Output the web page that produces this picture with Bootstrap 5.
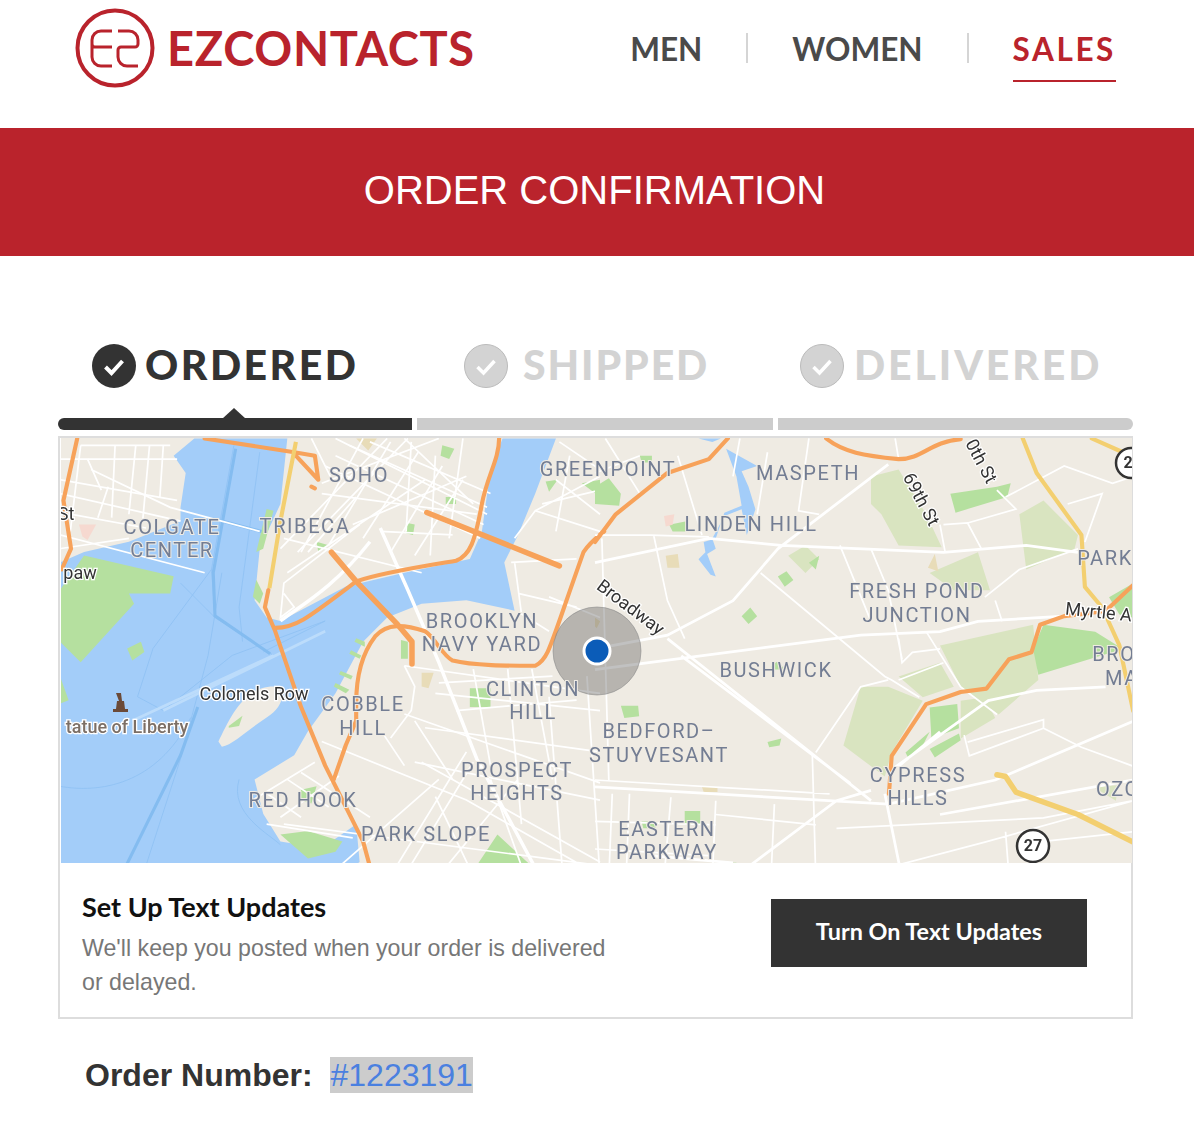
<!DOCTYPE html>
<html lang="en">
<head>
<meta charset="UTF-8">
<meta name="viewport" content="width=device-width, initial-scale=1">
<title>Order Confirmation</title>
<link href="https://cdn.jsdelivr.net/npm/bootstrap@5.3.3/dist/css/bootstrap.min.css" rel="stylesheet">
<style>
body { font-family: "Liberation Sans", Arial, sans-serif; background: #fff; color: #333; }
.site-head { height: 128px; padding: 0 78px 32px 75px; }
.logo-mark { width: 80px; height: 80px; }
.logo-word { font-family: Lato, sans-serif; font-weight: 700; font-size: 47px; color: #b9232c; margin-left: 12px; letter-spacing: .7px; line-height: 1; }
.top-nav a { font-family: Lato, sans-serif; font-weight: 700; font-size: 31.5px; color: #4a4a4a; text-decoration: none; line-height: 32px; padding: 19px 0 15px; border-bottom: 2px solid transparent; }
.top-nav a.is-active { color: #b9232c; border-bottom-color: #b9232c; letter-spacing: 2.6px; }
.top-nav .sep { width: 2px; height: 30px; background: #d5d5d5; margin: 0 44px; }
.hero-band { height: 128px; padding: 0 5px 4px 0; background: #ba232c; color: #fff; font-size: 40px; }
.order-wrap { padding: 0 61px 0 58px; }
.step-row { padding-top: 88px; height: 162px; }
.step-item { font-family: Lato, sans-serif; font-weight: 900; font-size: 41px; line-height: 42px; color: #d3d3d3; letter-spacing: 2.5px; }
.step-item.is-done { color: #333; }
.step-one { width: 359px; padding-left: 34px; gap: 9px; }
.step-two { width: 361px; padding-left: 47px; gap: 15px; letter-spacing: 1.9px; }
.step-three { padding-left: 22px; gap: 10px; letter-spacing: 2.9px; }
.step-icon { width: 44px; height: 44px; flex: none; }
.track-row { gap: 5px; height: 12px; }
.track-piece { flex: 1 1 0; background: #ccc; position: relative; }
.track-piece.is-done { background: #333; border-radius: 6px 0 0 6px; flex: 0 0 354px; }
.track-piece.is-last { border-radius: 0 6px 6px 0; flex: 0 0 355px; }
.track-piece.is-mid { flex: 0 0 356px; }
.track-notch { position: absolute; left: 164px; top: -10px; width: 24px; height: 11px; background: #333; clip-path: polygon(50% 0, 100% 100%, 0 100%); }
.map-card { margin-top: 6px; border: 2px solid #ddd; border-radius: 0; height: 583px; }
.map-box { display: block; width: 1071px; height: 425px; margin-left: 1px; filter: blur(.45px); }
.map-lbl { font-family: Roboto, sans-serif; font-size: 20px; fill: #737d93; letter-spacing: 1.6px; text-anchor: middle; paint-order: stroke; stroke: #efebe3; stroke-width: 2px; }
.map-dark { font-family: Roboto, sans-serif; font-size: 18px; fill: #333; text-anchor: middle; paint-order: stroke; stroke: #fff; stroke-width: 2.5px; }
.map-brown { fill: #7c6f66; font-weight: 500; }
.shield-num { font-family: Roboto, sans-serif; font-size: 16px; font-weight: 700; fill: #333; text-anchor: middle; }
.sms-box { padding: 27px 44px 0 22px; }
.sms-title { font-family: Lato, sans-serif; font-weight: 700; font-size: 27px; line-height: 34px; color: #111; margin: 0 0 7px; }
.sms-copy { font-size: 23.2px; line-height: 34px; color: #777; width: 540px; margin: 0; }
.sms-btn { width: 316px; height: 68px; padding: 0 0 3px; background: #333; color: #fff; font-family: Lato, sans-serif; font-weight: 700; font-size: 23.4px; border: 0; border-radius: 0; margin-top: 9px; }
.order-num { padding: 37px 0 0 27px; font-size: 32px; line-height: 38px; }
.order-num b { color: #333; margin-right: 9px; }
.order-num span { color: #4a80e0; background: #ccc; }
</style>
</head>
<body>
<header class="site-head d-flex align-items-center justify-content-between">
  <a class="d-flex align-items-center text-decoration-none" href="#">
    <svg class="logo-mark" viewBox="0 0 80 80" fill="none" stroke="#b9232c">
      <circle cx="40" cy="40" r="37.500" stroke-width="4"/>
      <g stroke-width="3">
        <path d="M37 23H26a9 9 0 0 0-9 9v4a3 3 0 0 0 3 3h17M17 36v13a9 9 0 0 0 9 9h11"/>
        <path d="M43 23h11a9 9 0 0 1 9 9v4a3 3 0 0 1-3 3H46a3 3 0 0 0-3 3v7a9 9 0 0 0 9 9h11"/>
      </g>
    </svg>
    <span class="logo-word">EZCONTACTS</span>
  </a>
  <nav class="top-nav d-flex align-items-center">
    <a href="#">MEN</a><span class="sep"></span>
    <a href="#">WOMEN</a><span class="sep"></span>
    <a href="#" class="is-active">SALES</a>
  </nav>
</header>

<div class="hero-band d-flex align-items-center justify-content-center">ORDER CONFIRMATION</div>

<main class="order-wrap">
  <div class="step-row d-flex">
    <div class="step-item is-done step-one d-flex">
      <svg class="step-icon" viewBox="0 0 44 44"><circle cx="22" cy="22" r="22" fill="#333"/><path d="M13.500 23l6 6 11-12" fill="none" stroke="#fff" stroke-width="4"/></svg>
      <span>ORDERED</span>
    </div>
    <div class="step-item step-two d-flex">
      <svg class="step-icon" viewBox="0 0 44 44"><circle cx="22" cy="22" r="21.500" fill="#d3d3d3" stroke="#bbb"/><path d="M13.500 23l6 6 11-12" fill="none" stroke="#fff" stroke-width="3.500"/></svg>
      <span>SHIPPED</span>
    </div>
    <div class="step-item step-three d-flex">
      <svg class="step-icon" viewBox="0 0 44 44"><circle cx="22" cy="22" r="21.500" fill="#d3d3d3" stroke="#bbb"/><path d="M13.500 23l6 6 11-12" fill="none" stroke="#fff" stroke-width="3.500"/></svg>
      <span>DELIVERED</span>
    </div>
  </div>
  <div class="track-row d-flex">
    <div class="track-piece is-done"><div class="track-notch"></div></div>
    <div class="track-piece is-mid"></div>
    <div class="track-piece is-last"></div>
  </div>

  <section class="map-card card">
    <svg class="map-box" viewBox="61 438 1071 425" xmlns="http://www.w3.org/2000/svg">
      <rect x="61" y="438" width="1071" height="425" fill="#efebe3"/>

      <!-- west part, drawn in zoomed crop units -->
      <g transform="translate(60 435) scale(.3444)">
        <path fill="#a3cdf9" d="M390 10 330 60 365 110 350 210 350 250 200 310 70 340 0 370V1285H800L870 1240 860 1130 760 1200 640 1180 590 1100 565 1000 680 930 720 860 800 750 880 600 950 530 1050 490 1180 480 1320 510 1290 370 1330 290 1380 170 1440 10H1285L1250 100 1225 280 1190 360 1000 400 830 440 640 540 600 530 565 480 580 330 640 200 660 10Z"/>
        <path fill="#b5e09f" d="M0 450 70 350 330 410 320 460 200 460 215 490 60 660 0 600ZM195 620 235 600 245 630 210 655ZM0 700 25 770 0 780ZM720 1150 820 1180 800 1210 720 1230 640 1160ZM1270 1160 1400 1280H1190ZM1190 735H1250V790H1190ZM1110 30 1145 40 1130 70 1105 60ZM600 215 620 220 590 330 570 340ZM570 420 590 460 580 490 560 470ZM745 310 780 320 750 340ZM1410 135 1445 130 1420 165ZM1515 140 1568 130V180ZM700 1030 745 1020 730 1070 695 1060ZM1005 255 1030 260 1025 290 1005 285ZM1120 180H1150V200H1120ZM990 595 1010 600V650H990ZM860 590 885 600 885 615 855 600ZM845 625 875 640 870 650 840 635ZM815 685 850 700 845 710 810 695ZM800 720 840 740 830 750 795 730Z"/>
        <path fill="#efebe3" d="M460 890C490 830 530 730 620 730 660 735 650 790 600 820 540 860 500 900 470 905Z"/>
        <path fill="#b5e09f" d="M490 845 530 815 520 845 490 850Z"/>
        <path fill="#e8dcb8" d="M860 10H920L895 45ZM1050 690H1085L1070 735 1050 730Z"/>
        <path fill="#f6d9d0" d="M55 260H105L80 305 65 295Z"/>
        <path fill="none" stroke="#8fc1f3" stroke-width="2.500" d="M505 30 440 390 450 530 620 640M580 50 520 500 530 600M440 390 270 620 225 760 300 800 500 640 770 540M450 530 350 430M0 1020C110 1040 280 1020 380 820M240 1280 350 940 430 640 470 400M520 1000C490 1100 610 1160 640 1190M590 630 770 540"/>
        <path fill="none" stroke="#84bcf0" stroke-width="9" d="M510 40 445 400 450 525 610 635M175 1285 350 930 400 790M470 250 585 280"/>
        <path fill="none" stroke="#bcdcfb" stroke-width="8" d="M300 800 770 570M210 830 620 640"/>

        <g fill="none" stroke="#fff" stroke-width="5">
          <path d="M60 30H320M90 100 320 210 580 280M0 170 350 250M80 70 120 160M220 30 200 230M300 30 290 180M30 230 250 270M140 150 110 240M0 290 420 400"/>
          <path d="M0 70 340 70M0 130 340 190M160 30 150 240M260 30 240 250M60 30 30 280M0 330 200 300"/>
          <path d="M800 10 1240 230M760 140 1100 10M1000 10 1200 200M640 330 950 10M690 340 1010 10M660 400 1060 130M720 340 860 180M930 280 1140 290M760 170 1210 230M650 300 1050 400M850 260 1180 120M730 10 790 130M1020 20 1005 280M1090 60 1075 350M1170 10 1130 300"/>
          <path d="M800 60 1230 260M770 90 1220 300M840 30 1240 210M900 20 1250 170M880 10 700 340M960 20 780 320M1040 50 880 300M1110 90 960 340M1170 130 1030 350"/>
          <path d="M1310 370 1500 360M1320 300 1380 220 1568 280M1380 220 1568 120M1440 130 1568 230M1320 370 1340 520 1420 570M1420 470 1568 530M1450 20 1568 100M1400 200 1568 160M1480 60 1440 280M1330 460 1500 500"/>
          <path d="M1000 670 1568 750M1000 810 1568 1010M1100 720 1430 700M1150 800 1500 770M1030 830 1140 1000M1300 680 1340 1130M1420 760 1460 1280M1530 700 1568 1285M1180 920 960 1280M1100 1000 780 1280M650 1130 1568 1250M760 890 1180 1060 1568 1280M1050 950 1568 1240M1200 950 1000 1280M1330 1000 1100 1280"/>
          <path d="M1090 750 1568 800M1060 850 1568 920M1030 950 1568 1060M1200 680 1250 960M1370 680 1430 1000M1090 1050 1200 1280M1250 1000 1350 1280"/>
          <path d="M560 1060 740 950M640 1110 810 990M700 980 900 1110M940 870 1000 960M1000 670 1030 730 1020 800 960 880M600 1040 700 1110M660 1000 780 1080M600 1130 850 1170"/>
          <path d="M650 460 680 500 640 530 650 430 870 260"/>
        </g>
        <g fill="none" stroke="#fff" stroke-width="10">
          <path d="M930 270 1010 450 1100 660 1210 940 1395 1285"/>
          <path d="M640 540C690 500 790 450 900 310"/>
        </g>
        <g fill="none" stroke="#f7a25a" stroke-linejoin="round" stroke-linecap="round">
          <g stroke-width="12">
            <path d="M50 10 10 190 32 330 5 390"/>
            <path d="M420 10 680 50 740 60 750 130 680 55M740 155 730 150"/>
            <path d="M605 450 595 500 625 570 700 790 770 960 820 1060 880 1180 910 1290"/>
            <path d="M625 560C680 560 710 540 860 425 930 400 1060 380 1150 365 1190 350 1205 310 1225 200 1240 120 1275 70 1275 10"/>
            <path d="M860 780C860 700 880 630 915 585 950 545 1000 550 1060 570 1090 590 1110 640 1140 655 1200 670 1300 670 1380 670 1420 650 1420 620 1520 340 1540 310 1568 290 1580 280"/>
            <path d="M860 780 860 830 830 900 795 1000"/>
          </g>
          <path stroke-width="16" d="M1065 225 1450 380M788 340 860 425 980 550 1022 600 1022 665"/>
        </g>
        <path fill="none" stroke="#f3cf70" stroke-width="12" d="M685 20 640 250 608 445"/>
        <path fill="none" stroke="#f3cf70" stroke-width="12" d="M920 1260 950 1290"/>
      </g>

      <!-- east part -->
      <g transform="translate(595 435) scale(.345)">
        <path fill="#a3cdf9" d="M300 10H365L340 20ZM380 40 470 90 425 105 445 150 465 215 440 290 425 215 375 235 340 300 350 330 325 345 350 410 335 405 300 360 320 340 315 310 350 300 375 225 425 205 410 120Z"/>
        <path fill="#a3cdf9" d="M1000 790 1030 830 1010 835Z"/>
        <path fill="#d9e4c0" d="M800 120 880 100 960 230 1005 325 880 320 830 230 800 200ZM1230 230 1300 190 1400 290 1390 330 1250 390ZM970 400 1110 340 1145 450 1040 450ZM560 350 610 320 650 360 610 400ZM1000 610 1270 550 1285 710 1170 810 1060 730ZM880 700 1000 660 1040 730 950 760ZM720 900 770 730 850 730 950 770 860 920 840 990ZM1060 770 1130 760 1160 820 1060 880Z"/>
        <path fill="#b5e09f" d="M1030 170 1165 150 1205 140 1195 180 1045 225ZM0 150 40 125 75 170 70 205 0 200ZM1270 620 1300 550 1450 570 1530 620 1285 695ZM970 790 1050 780 1055 850 975 880ZM900 920 970 860 950 900 910 940ZM970 910 1055 865 1060 885 985 935ZM215 260 265 250V280L225 280ZM530 410 555 395 575 420 550 440ZM425 525 450 500 470 525 445 548ZM75 785H125L128 815 85 820ZM500 890 540 880 535 900 505 905ZM135 1120H175V1140H140ZM260 1090H305V1130H260ZM375 1240H410V1285H375ZM1490 470 1560 430V530L1520 520ZM130 60H165V80H135ZM620 370 650 350 640 390ZM510 670 530 655 550 680H510ZM1220 1180H1250V1210H1225Z"/>
        <path fill="#e8dcb8" d="M205 350 240 345 245 385 210 385ZM965 385 985 345 995 395ZM310 1020H355V1035H315ZM0 530 15 540 5 560 0 555Z"/>
        <path fill="#f6d9d0" d="M200 235 230 230 225 260 205 265Z"/>
        <path fill="#d9e4c0" d="M1445 1020 1515 1015 1510 1060Z"/>
        <g fill="none" stroke="#fff" stroke-width="5">
          <path d="M30 10 130 170M240 60 310 290M420 10 400 120M500 50 470 230M620 10 590 220 650 230M870 10 880 70M0 290 160 290 330 295M170 290 210 480 260 590M480 400 840 700 860 710 940 760M710 320 800 540M800 330 850 450 890 650M1010 260 1080 255 1120 330M1000 260 1015 340M1080 255 1220 215 1165 160M1190 180 1360 90 1500 140 1560 120M1370 200 1470 170 1420 310M1130 470 1230 390 1400 330M1160 480 1180 540M960 570 1060 730 1165 810M880 590 890 660 920 630 1000 620M880 710 1010 660M640 920 770 730 850 710M630 930 640 1285M520 1070 510 1285M350 1060 340 1285M50 1040 40 1285M20 300 40 1000M0 1000 680 1040M700 1140 1300 1110 1560 1060M1070 870 1085 930 1300 850 1300 825 1080 890M1300 850 1410 905 1560 960M750 1280 1130 1180 1560 1060M1190 1150 1200 1280M1280 1180 1560 1150"/>
          <path d="M0 1120 350 1130M0 1200 340 1220M100 1040 90 1285M220 1050 200 1285M350 1100 640 1130M0 110 130 60"/>
        </g>
        <g fill="none" stroke="#fff" stroke-width="8">
          <path d="M0 370 330 300 540 320 1010 340 1250 320 1400 340M0 680 770 580 1000 570 1110 540 1360 525M0 620 210 580 400 480 530 330 850 85M210 590 800 1060M250 640 740 1010M0 1020 850 1070 1160 1000 1560 830M1000 1100 1560 1000M400 1285 700 1060 800 1030M860 970 1140 770 1280 740 1480 730M170 1220 400 1240M1000 860 880 960M840 1040 890 1285"/>
        </g>
        <g fill="none" stroke-linejoin="round" stroke-linecap="round" stroke-width="12">
          <path stroke="#f3cf70" d="M1240 10 1280 110 1410 290 1420 440 1470 500 1520 610 1560 800M1440 10 1530 50"/>
          <path stroke="#f3cf70" stroke-width="16" d="M1165 985 1190 990 1220 1035 1400 1100 1560 1180"/>
          <path stroke="#f7a25a" d="M0 310 60 230 210 110 330 70 385 10M670 10C720 50 780 60 880 70 950 70 970 20 1060 12M852 1040 860 930 960 780 1060 745 1135 735 1200 650 1265 630 1290 550 1360 525 1480 510 1560 435"/>
        </g>
      </g>

      <!-- location marker -->
      <circle cx="597" cy="651" r="44" fill="#5b5b5b" fill-opacity=".38" stroke="#8a8a8a" stroke-opacity=".6"/>
      <circle cx="597" cy="651" r="13" fill="#0b5cb8" stroke="#fff" stroke-width="3"/>

      <!-- statue icon -->
      <path fill="#6b4a38" d="M118 693h5l1 8 2 0 1 8h3v3h-15v-3h3l1-8 2 0Z" transform="translate(-2)"/>

      <!-- shields -->
      <circle cx="1033" cy="846" r="16" fill="#fff" stroke="#333" stroke-width="2.500"/>
      <text class="shield-num" x="1033" y="851">27</text>
      <circle cx="1131" cy="463" r="15" fill="#fff" stroke="#333" stroke-width="2.500"/>
      <text class="shield-num" x="1128" y="468">2</text>

      <!-- area labels -->
      <text class="map-lbl" x="359" y="482">SOHO</text>
      <text class="map-lbl" x="172" y="534">COLGATE</text>
      <text class="map-lbl" x="172" y="557">CENTER</text>
      <text class="map-lbl" x="305" y="533">TRIBECA</text>
      <text class="map-lbl" x="608" y="476">GREENPOINT</text>
      <text class="map-lbl" x="808" y="480">MASPETH</text>
      <text class="map-lbl" x="751" y="531">LINDEN HILL</text>
      <text class="map-lbl" x="1105" y="565">PARK</text>
      <text class="map-lbl" x="917" y="598">FRESH POND</text>
      <text class="map-lbl" x="917" y="622">JUNCTION</text>
      <text class="map-lbl" x="482" y="628">BROOKLYN</text>
      <text class="map-lbl" x="482" y="651">NAVY YARD</text>
      <text class="map-lbl" x="776" y="677">BUSHWICK</text>
      <text class="map-lbl" x="533" y="696">CLINTON</text>
      <text class="map-lbl" x="533" y="719">HILL</text>
      <text class="map-lbl" x="363" y="711">COBBLE</text>
      <text class="map-lbl" x="363" y="735">HILL</text>
      <text class="map-lbl" x="659" y="738">BEDFORD–</text>
      <text class="map-lbl" x="659" y="762">STUYVESANT</text>
      <text class="map-lbl" x="517" y="777">PROSPECT</text>
      <text class="map-lbl" x="517" y="800">HEIGHTS</text>
      <text class="map-lbl" x="303" y="807">RED HOOK</text>
      <text class="map-lbl" x="426" y="841">PARK SLOPE</text>
      <text class="map-lbl" x="667" y="836">EASTERN</text>
      <text class="map-lbl" x="667" y="859">PARKWAY</text>
      <text class="map-lbl" x="918" y="782">CYPRESS</text>
      <text class="map-lbl" x="918" y="805">HILLS</text>
      <text class="map-lbl" x="1114" y="661">BRO</text>
      <text class="map-lbl" x="1122" y="685">MA</text>
      <text class="map-lbl" x="1118" y="796">OZO</text>

      <!-- street labels -->
      <text class="map-dark" x="254" y="700">Colonels Row</text>
      <text class="map-dark" x="80" y="579">paw</text>
      <text class="map-dark" x="66" y="520">St</text>
      <text class="map-dark map-brown" x="127" y="733">tatue of Liberty</text>
      <text class="map-dark" x="0" y="0" transform="translate(627 612) rotate(37)">Broadway</text>
      <text class="map-dark" x="0" y="0" transform="translate(916 502) rotate(62)">69th St</text>
      <text class="map-dark" x="0" y="0" transform="translate(976 464) rotate(62)">0th St</text>
      <text class="map-dark" x="0" y="0" transform="translate(1098 618) rotate(6)">Myrtle A</text>
    </svg>

    <div class="sms-box d-flex justify-content-between">
      <div>
        <h2 class="sms-title">Set Up Text Updates</h2>
        <p class="sms-copy">We'll keep you posted when your order is delivered or delayed.</p>
      </div>
      <button class="sms-btn btn" type="button">Turn On Text Updates</button>
    </div>
  </section>

  <div class="order-num"><b>Order Number:</b> <span>#1223191</span></div>
</main>

<script src="https://cdn.jsdelivr.net/npm/bootstrap@5.3.3/dist/js/bootstrap.bundle.min.js"></script>
</body>
</html>
